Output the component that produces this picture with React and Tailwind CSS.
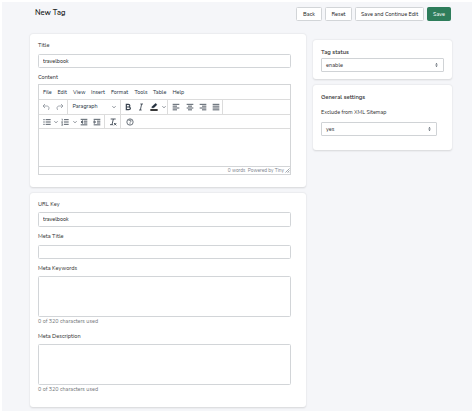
import React, { useState } from 'react';

const Chevron = () => (
  <svg viewBox="0 0 10 10" className="w-1 h-1" fill="none" stroke="#5b636e" strokeWidth="1.8">
    <path d="M1 3l4 4 4-4" />
  </svg>
);

const Icon = ({ children }) => (
  <svg viewBox="0 0 24 24" className="w-2 h-2 shrink-0" fill="none" stroke="#3a4450" strokeWidth="2.6">
    {children}
  </svg>
);

const Lines = ({ d }) => <Icon><path d={d} /></Icon>;

const Cell = ({ width, children, border }) => (
  <div className={`flex h-full shrink-0 items-center justify-center ${width} ${border ? 'border-r border-[#dcdcdc]' : ''}`}>
    {children}
  </div>
);

const Label = ({ children, className = 'text-[5.6px]' }) => (
  <div className={`h-2 whitespace-nowrap leading-[8px] text-[#303030] ${className}`}>{children}</div>
);

const inputStyle =
  'block w-full rounded-[1.5px] border border-[#d2d5d8] bg-white text-[5.4px] text-[#202223] outline-none';

const MetaArea = ({ label, value, onChange, className }) => (
  <div className={className}>
    <Label>{label}</Label>
    <textarea
      value={value}
      onChange={onChange}
      className={`${inputStyle} mt-[4px] h-[41px] resize-none px-1 py-0.5`}
    />
    <div className="mt-[1px] h-2 whitespace-nowrap text-[5.4px] leading-[8px] tracking-[0.01px] text-[#737679]">
      {value.length} of 320 characters used
    </div>
  </div>
);

const Select = ({ value, width }) => (
  <button
    type="button"
    className={`flex h-[14px] items-center justify-between rounded-[1px] border border-[#d0d3d6] bg-white pl-1 pr-[5px] text-[5.6px] text-[#303030] ${width}`}
  >
    <span>{value}</span>
    <svg viewBox="0 0 6 10" className="h-[4px] w-[3px]" fill="#454f5b">
      <path d="M3 0l3 4H0zM3 10l3-4H0z" />
    </svg>
  </button>
);

const menus = [
  ['File', 'w-[14.5px]'],
  ['Edit', 'w-[15.5px]'],
  ['View', 'w-[18px]'],
  ['Insert', 'w-[20px]'],
  ['Format', 'w-[23.5px]'],
  ['Tools', 'w-[18.5px]'],
  ['Table', 'w-[19.5px]'],
  ['Help', 'w-[14px]'],
];

const Editor = () => (
  <div className="mt-[3px] flex h-[91px] flex-col border border-[#d3d5d7] bg-white text-[#222f3e]">
    {/* Menu bar */}
    <div className="flex h-[14px] items-center pl-1 pt-[1px] text-[5.4px] leading-[8px]">
      {menus.map(([name, width]) => (
        <span key={name} className={`shrink-0 whitespace-nowrap ${width}`}>{name}</span>
      ))}
    </div>

    {/* First toolbar row */}
    <div className="flex h-[15px] items-center border-t border-[#dcdcdc]">
      <Cell width="w-[14px]">
        <svg viewBox="0 0 24 24" className="h-2 w-2" fill="none" stroke="#8b929a" strokeWidth="2.4">
          <path d="M9 3L3 9l6 6M3 9h11c5 0 7 3 7 6 0 3-1 5-3 6" />
        </svg>
      </Cell>
      <Cell width="w-[15px]" border>
        <svg viewBox="0 0 24 24" className="h-2 w-2" fill="none" stroke="#8b929a" strokeWidth="2.4">
          <path d="M15 3l6 6-6 6M21 9H10c-5 0-7 3-7 6 0 3 1 5 3 6" />
        </svg>
      </Cell>
      <Cell width="w-[53px]" border>
        <span className="mr-[14px] text-[5.4px] leading-[8px]">Paragraph</span>
        <Chevron />
      </Cell>
      <Cell width="w-[14px]">
        <Icon><path d="M7 4h6c6 0 6 8 0 8H7zm0 8h7c7 0 7 8 0 8H7z" strokeWidth="3.6" /></Icon>
      </Cell>
      <Cell width="w-[12px]">
        <Lines d="M10 3h8M6 21h8M14 3l-4 18" />
      </Cell>
      <Cell width="w-[13px]">
        <Icon>
          <path d="M1 21h22" strokeWidth="5" stroke="#111" />
          <path d="M5 15l2-5L17 1l4 4-9 9z" fill="#222f3e" strokeWidth="1" />
        </Icon>
      </Cell>
      <Cell width="w-[8px]" border><Chevron /></Cell>
      <Cell width="w-[15px]"><Lines d="M2 4h20M2 9.5h13M2 15h20M2 20.5h13" /></Cell>
      <Cell width="w-[13px]"><Lines d="M2 4h20M6 9.5h12M2 15h20M6 20.5h12" /></Cell>
      <Cell width="w-[13px]"><Lines d="M2 4h20M9 9.5h13M2 15h20M9 20.5h13" /></Cell>
      <Cell width="w-[14px]" border><Lines d="M2 4h20M2 9.5h20M2 15h20M2 20.5h20" /></Cell>
    </div>

    {/* Second toolbar row */}
    <div className="flex h-[15px] items-center border-y border-[#dcdcdc]">
      <Cell width="w-[15px]">
        <Lines d="M8 5h15M8 12h15M8 19h15M1 5h4M1 12h4M1 19h4" />
      </Cell>
      <Cell width="w-[4px]"><Chevron /></Cell>
      <Cell width="w-[14px]">
        <Icon>
          <path d="M9 5h14M9 12h14M9 19h14" />
          <path d="M2 3h2v5M1 11h4l-3 4h4M1 18h4v4H1" strokeWidth="1.6" />
        </Icon>
      </Cell>
      <Cell width="w-[5px]"><Chevron /></Cell>
      <Cell width="w-[13px]"><Lines d="M2 4h20M12 9.5h10M12 15h10M2 20.5h20M8 8l-5 4 5 4z" /></Cell>
      <Cell width="w-[15px]" border><Lines d="M2 4h20M12 9.5h10M12 15h10M2 20.5h20M3 8l5 4-5 4z" /></Cell>
      <Cell width="w-[16px]" border>
        <Lines d="M5 3h15M13 3L9 20M3 20h9M15 15l7 7M22 15l-7 7" />
      </Cell>
      <Cell width="w-[17px]">
        <Icon>
          <circle cx="12" cy="12" r="9.5" strokeWidth="2.2" />
          <path d="M8.5 9c0-5 7-4 7 0 0 3-3.5 2-3.5 5M12 16v3" strokeWidth="2.2" />
        </Icon>
      </Cell>
    </div>

    <div className="flex-1" />

    {/* Status bar */}
    <div className="flex h-[8px] items-center justify-end border-t border-[#d3d5d7] text-[4.8px] leading-[7px] text-[#7a828b]">
      <span className="whitespace-pre">0 words  Powered by Tiny</span>
      <svg viewBox="0 0 10 10" className="ml-[1px] h-[5px] w-[5px]" fill="none" stroke="#7a828b" strokeWidth="1.4">
        <path d="M1 9L9 1M5 9l4-4M8 9l1-1" />
      </svg>
    </div>
  </div>
);

const card = 'rounded-[3px] bg-white shadow-[0_0.5px_2px_rgba(23,24,24,0.14)]';
const button =
  'flex h-[14px] items-center justify-center whitespace-nowrap rounded-[1.5px] border text-[5.5px] leading-[8px]';

const App = () => {
  const [title, setTitle] = useState('travelbook');
  const [urlKey, setUrlKey] = useState('travelbook');
  const [metaTitle, setMetaTitle] = useState('');
  const [keywords, setKeywords] = useState('');
  const [description, setDescription] = useState('');

  return (
    <div className="h-[413px] w-[474px] overflow-hidden bg-white px-[2px] py-[2px] font-['Nunito','Open_Sans',sans-serif]">
      <div className="h-[409px] bg-[#f5f6f9]">
        {/* Page header */}
        <div className="flex h-[32px] items-start justify-between pl-[33px] pr-[21px] pt-[5px]">
          <h1 className="text-[7.5px] font-semibold leading-[11px] text-[#202223]">New Tag</h1>
          <div className="flex gap-[3px]">
            <button className={`${button} w-[26px] border-[#d2d5d8] bg-white text-[#202223]`}>Back</button>
            <button className={`${button} w-[27px] border-[#d2d5d8] bg-white text-[#202223]`}>Reset</button>
            <button className={`${button} w-[69px] border-[#d2d5d8] bg-white text-[#202223]`}>
              Save and Continue Edit
            </button>
            <button className={`${button} w-[24px] border-[#2e7d5b] bg-[#2e7d5b] text-white`}>Save</button>
          </div>
        </div>

        <div className="flex items-start gap-[7px] pl-[28px]">
          {/* Main column */}
          <div className="flex w-[276px] flex-col gap-[6px]">
            <div className={`${card} h-[153px] pl-[8px] pr-[15px] pt-[7px]`}>
              <Label>Title</Label>
              <input
                value={title}
                onChange={(e) => setTitle(e.target.value)}
                className={`${inputStyle} mt-[5px] h-[14px] px-1`}
              />
              <Label className="mt-[5px] text-[5.6px]">Content</Label>
              <Editor />
            </div>

            <div className={`${card} h-[214px] pl-[8px] pr-[15px] pt-[7px]`}>
              <Label>URL Key</Label>
              <input
                value={urlKey}
                onChange={(e) => setUrlKey(e.target.value)}
                className={`${inputStyle} mt-[4px] h-[15px] px-1`}
              />
              <Label className="mt-[5px] text-[5.6px]">Meta Title</Label>
              <input
                value={metaTitle}
                onChange={(e) => setMetaTitle(e.target.value)}
                className={`${inputStyle} mt-[5px] h-[14px] px-1`}
              />
              <MetaArea
                className="mt-[5px]"
                label="Meta Keywords"
                value={keywords}
                onChange={(e) => setKeywords(e.target.value)}
              />
              <MetaArea
                className="mt-[6px]"
                label="Meta Description"
                value={description}
                onChange={(e) => setDescription(e.target.value)}
              />
            </div>
          </div>

          {/* Side column */}
          <div className="mt-[6px] flex w-[139px] flex-col gap-[6px]">
            <div className={`${card} h-[39px] px-[8px] pt-[8px]`}>
              <Label className="text-[5.9px] font-semibold">Tag status</Label>
              <Select value="enable" width="mt-[2px] w-[123px]" />
            </div>
            <div className={`${card} h-[65px] px-[8px] pt-[8px]`}>
              <Label className="text-[5.9px] font-semibold">General settings</Label>
              <Label className="mt-[8px] text-[5.4px]">Exclude from XML Sitemap</Label>
              <Select value="yes" width="mt-[5px] w-[116px]" />
            </div>
          </div>
        </div>
      </div>
    </div>
  );
};

export default App;
